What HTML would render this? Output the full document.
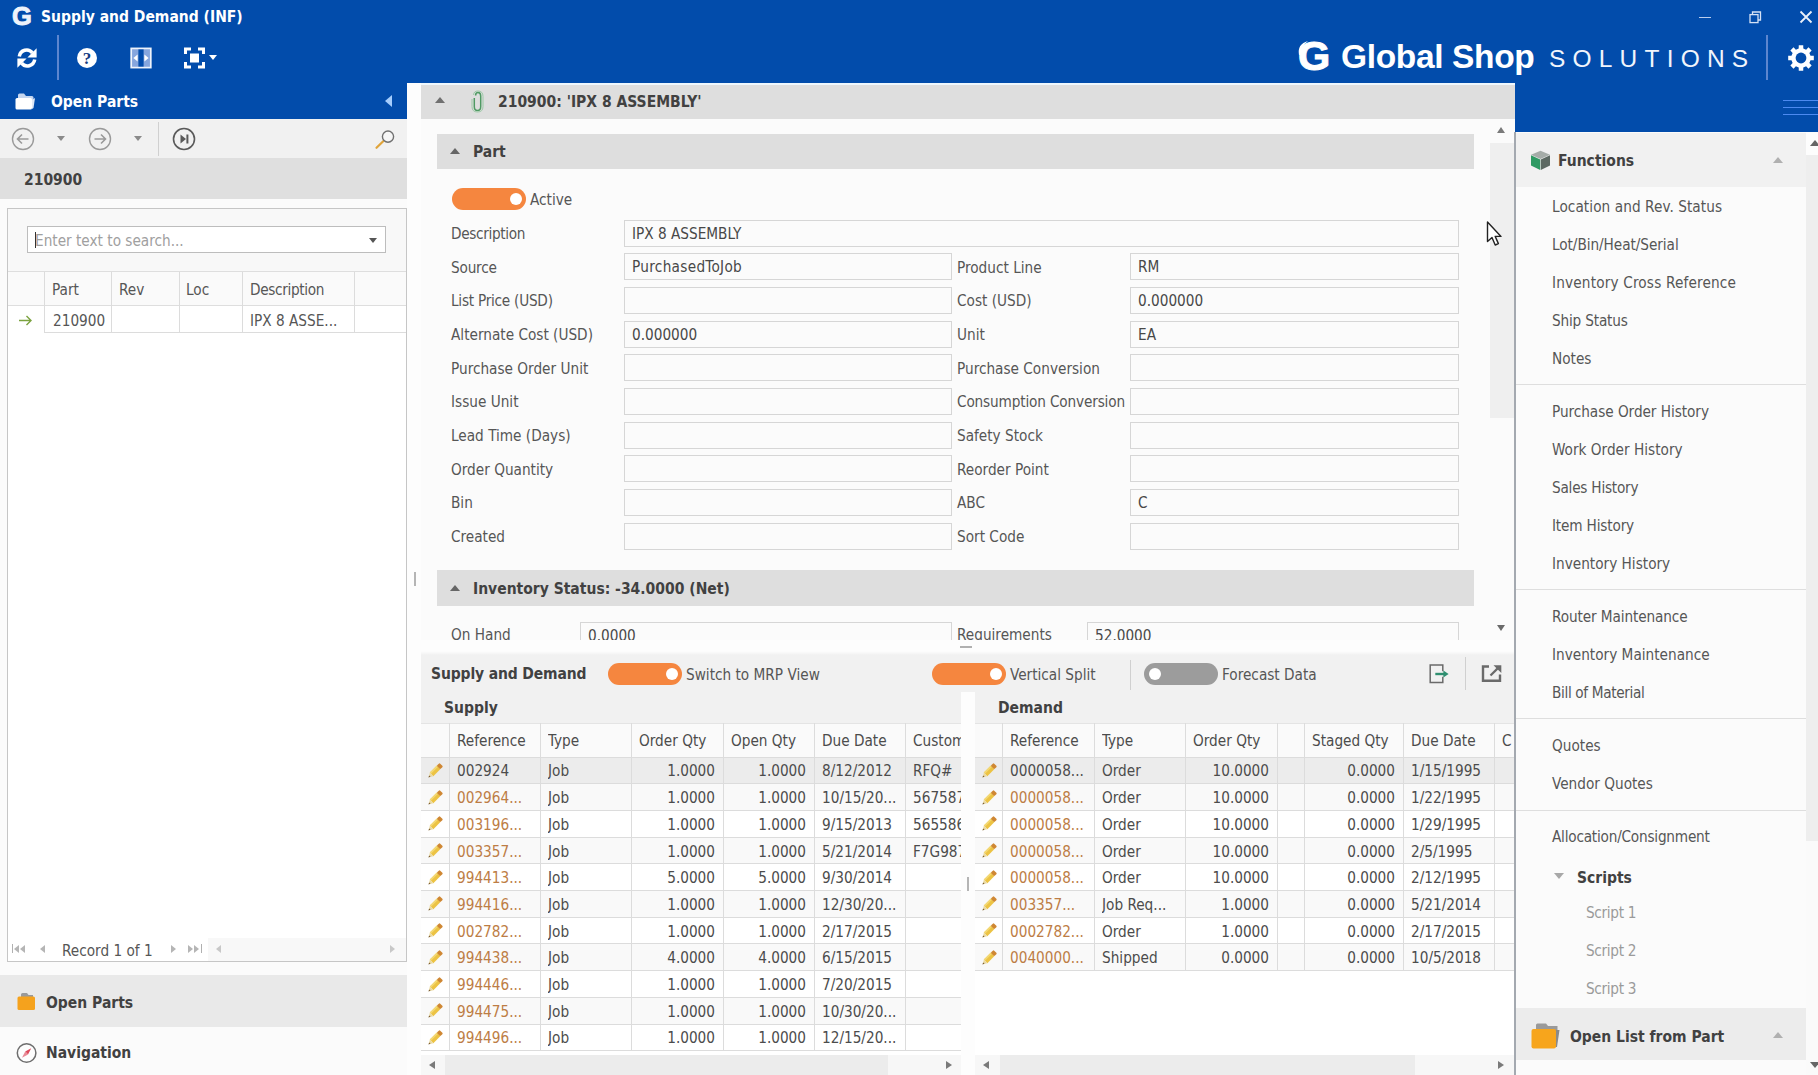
<!DOCTYPE html><html><head><meta charset='utf-8'><title>Supply and Demand (INF)</title><style>
*{box-sizing:border-box;margin:0;padding:0}
html,body{width:1818px;height:1075px;overflow:hidden;background:#fbfbfb}
body{position:relative;font-family:"DejaVu Sans Condensed","Liberation Sans",sans-serif;font-size:15.2px;color:#565656}
.a{position:absolute}
.t{position:absolute;white-space:nowrap;line-height:20px;height:20px}
.b{font-weight:bold;color:#414141}
.w{color:#fff}
.inp{position:absolute;height:27px;border:1px solid #d6d6d6;background:#fbfbfb;line-height:27px;padding-left:7px;white-space:nowrap;overflow:hidden;color:#484848}
.band{position:absolute;background:#dedede}
.tog{position:absolute;width:74px;height:22px;border-radius:11px;background:#f5863f}
.tog i{position:absolute;right:4px;top:5px;width:12px;height:12px;border-radius:6px;background:#fff}
.tog.off{background:#9c9c9c}
.tog.off i{right:auto;left:5px}
.tri-up{position:absolute;width:0;height:0;border-left:5px solid transparent;border-right:5px solid transparent;border-bottom:7px solid #6a6a6a}
.tri-dn{position:absolute;width:0;height:0;border-left:5px solid transparent;border-right:5px solid transparent;border-top:7px solid #6a6a6a}
.hl{position:absolute;height:1px;background:#dcdcdc}
.vl{position:absolute;width:1px;background:#dcdcdc}
.cell{position:absolute;white-space:nowrap;overflow:hidden;line-height:20px;height:20px;color:#4c4c4c}
.lnk{color:#bd7d45}
.r{text-align:right}
</style></head><body>
<div class='a' style='left:0px;top:0px;width:1818px;height:83px;background:#024cab;'></div>
<div class='a' style='left:0px;top:83px;width:407px;height:36px;background:#024cab;'></div>
<div class='a' style='left:1515px;top:83px;width:303px;height:49px;background:#024cab;'></div>
<div class='t b w' style='left:41px;top:7px;font-size:15.5px;color:#fff'>Supply and Demand (INF)</div>
<div class='t b w' style='left:51px;top:92px;font-size:15.5px;color:#fff'>Open Parts</div>
<div class='a' style='left:0px;top:119px;width:407px;height:39px;background:#f1f1f1;'></div>
<div class='a' style='left:0px;top:158px;width:407px;height:41px;background:#dfdfdf;'></div>
<div class='t b' style='left:24px;top:170px;font-size:15.5px'>210900</div>
<div class='a' style='left:0px;top:199px;width:407px;height:776px;background:#fbfbfb;'></div>
<div class='a' style='left:7px;top:208px;width:400px;height:754px;background:#ffffff;border:1px solid #c6c6c6'></div>
<div class='a' style='left:8px;top:209px;width:398px;height:62px;background:#f8f8f8;'></div>
<div class='a' style='left:27px;top:226px;width:359px;height:27px;background:#fff;border:1px solid #bdbdbd'></div>
<div class='t ' style='left:35px;top:231px;color:#a0a0a0'>Enter text to search...</div>
<div class='a' style='left:8px;top:271px;width:398px;height:35px;background:#fafafa;border-top:1px solid #dedede;border-bottom:1px solid #dedede'></div>
<div class='vl' style='left:44px;top:272px;height:61px'></div>
<div class='vl' style='left:111px;top:272px;height:61px'></div>
<div class='vl' style='left:179px;top:272px;height:61px'></div>
<div class='vl' style='left:242px;top:272px;height:61px'></div>
<div class='vl' style='left:354px;top:272px;height:61px'></div>
<div class='hl' style='left:44px;top:332px;width:362px'></div>
<div class='t ' style='left:52px;top:280px;'>Part</div>
<div class='t ' style='left:119px;top:280px;'>Rev</div>
<div class='t ' style='left:186px;top:280px;'>Loc</div>
<div class='t ' style='left:250px;top:280px;;letter-spacing:-0.34px;'>Description</div>
<div class='t ' style='left:53px;top:311px;'>210900</div>
<div class='t ' style='left:250px;top:311px;'>IPX 8 ASSE...</div>
<div class='t ' style='left:62px;top:941px;'>Record 1 of 1</div>
<div class='a' style='left:0px;top:975px;width:407px;height:52px;background:#e9e9e9;'></div>
<div class='t b' style='left:46px;top:993px;font-size:15.5px'>Open Parts</div>
<div class='a' style='left:0px;top:1027px;width:407px;height:48px;background:#fbfbfb;'></div>
<div class='t b' style='left:46px;top:1043px;font-size:15.5px'>Navigation</div>
<div class='a' style='left:407px;top:83px;width:14px;height:992px;background:#fdfdfd;'></div>
<div class='a' style='left:421px;top:83px;width:1094px;height:2px;background:#eef7fd;'></div>
<div class='a' style='left:421px;top:85px;width:1094px;height:34px;background:#dedede;'></div>
<div class='t b' style='left:498px;top:92px;font-size:15.5px'>210900: 'IPX 8 ASSEMBLY'</div>
<div class='a' style='left:421px;top:119px;width:1093px;height:536px;background:#fbfbfb;'></div>
<div class='a' style='left:437px;top:134px;width:1037px;height:35px;background:#dedede;'></div>
<div class='t b' style='left:473px;top:142px;font-size:15.5px'>Part</div>
<div class='tog' style='left:452px;top:188px'><i></i></div>
<div class='t ' style='left:530px;top:190px;'>Active</div>
<div class='t ' style='left:451px;top:224px;;letter-spacing:-0.34px;'>Description</div>
<div class='inp' style='left:624px;top:219.5px;width:835px'>IPX 8 ASSEMBLY</div>
<div class='t ' style='left:451px;top:258px;;letter-spacing:-0.2px;'>Source</div>
<div class='inp' style='left:624px;top:253.2px;width:328px'><span style='letter-spacing:0.3px'>PurchasedToJob</span></div>
<div class='t ' style='left:957px;top:258px;'>Product Line</div>
<div class='inp' style='left:1130px;top:253.2px;width:329px'>RM</div>
<div class='t ' style='left:451px;top:291px;;letter-spacing:-0.25px;'>List Price (USD)</div>
<div class='inp' style='left:624px;top:286.8px;width:328px'></div>
<div class='t ' style='left:957px;top:291px;'>Cost (USD)</div>
<div class='inp' style='left:1130px;top:286.8px;width:329px'>0.000000</div>
<div class='t ' style='left:451px;top:325px;'>Alternate Cost (USD)</div>
<div class='inp' style='left:624px;top:320.5px;width:328px'>0.000000</div>
<div class='t ' style='left:957px;top:325px;'>Unit</div>
<div class='inp' style='left:1130px;top:320.5px;width:329px'>EA</div>
<div class='t ' style='left:451px;top:359px;'>Purchase Order Unit</div>
<div class='inp' style='left:624px;top:354.2px;width:328px'></div>
<div class='t ' style='left:957px;top:359px;'>Purchase Conversion</div>
<div class='inp' style='left:1130px;top:354.2px;width:329px'></div>
<div class='t ' style='left:451px;top:392px;'>Issue Unit</div>
<div class='inp' style='left:624px;top:387.9px;width:328px'></div>
<div class='t ' style='left:957px;top:392px;;letter-spacing:-0.16px;'>Consumption Conversion</div>
<div class='inp' style='left:1130px;top:387.9px;width:329px'></div>
<div class='t ' style='left:451px;top:426px;'>Lead Time (Days)</div>
<div class='inp' style='left:624px;top:421.5px;width:328px'></div>
<div class='t ' style='left:957px;top:426px;'>Safety Stock</div>
<div class='inp' style='left:1130px;top:421.5px;width:329px'></div>
<div class='t ' style='left:451px;top:460px;'>Order Quantity</div>
<div class='inp' style='left:624px;top:455.2px;width:328px'></div>
<div class='t ' style='left:957px;top:460px;'>Reorder Point</div>
<div class='inp' style='left:1130px;top:455.2px;width:329px'></div>
<div class='t ' style='left:451px;top:493px;'>Bin</div>
<div class='inp' style='left:624px;top:488.9px;width:328px'></div>
<div class='t ' style='left:957px;top:493px;'>ABC</div>
<div class='inp' style='left:1130px;top:488.9px;width:329px'>C</div>
<div class='t ' style='left:451px;top:527px;'>Created</div>
<div class='inp' style='left:624px;top:522.5px;width:328px'></div>
<div class='t ' style='left:957px;top:527px;'>Sort Code</div>
<div class='inp' style='left:1130px;top:522.5px;width:329px'></div>
<div class='a' style='left:437px;top:570px;width:1037px;height:36px;background:#dedede;'></div>
<div class='t b' style='left:473px;top:579px;font-size:15.5px'>Inventory Status: -34.0000 (Net)</div>
<div class='a' style='left:421px;top:606px;width:1069px;height:34px;overflow:hidden'>
<div class='t' style='left:30px;top:19px'>On Hand</div>
<div class='inp' style='left:159px;top:16px;width:372px'>0.0000</div>
<div class='t' style='left:536px;top:19px'>Requirements</div>
<div class='inp' style='left:666px;top:16px;width:372px'>52.0000</div>
</div>
<div class='a' style='left:1490px;top:119px;width:24px;height:521px;background:#fbfbfb;'></div>
<div class='a' style='left:1490px;top:143px;width:24px;height:275px;background:#efefef;'></div>
<div class='a' style='left:421px;top:640px;width:1093px;height:15px;background:linear-gradient(#fdfdfd 0%,#fdfdfd 75%,#f1f1f1 100%);'></div>
<div class='a' style='left:960px;top:646px;width:12px;height:2px;background:#b0b0b0;'></div>
<div class='a' style='left:421px;top:655px;width:1093px;height:68px;background:#f1f1f1;'></div>
<div class='t b' style='left:431px;top:664px;font-size:15.5px;letter-spacing:-0.14px'>Supply and Demand</div>
<div class='tog' style='left:608px;top:663px'><i></i></div>
<div class='t ' style='left:686px;top:665px;'>Switch to MRP View</div>
<div class='tog' style='left:932px;top:663px'><i></i></div>
<div class='t ' style='left:1010px;top:665px;'>Vertical Split</div>
<div class='vl' style='left:1130px;top:660px;height:30px;background:#d0d0d0'></div>
<div class='tog off' style='left:1144px;top:663px'><i></i></div>
<div class='t ' style='left:1222px;top:665px;'>Forecast Data</div>
<div class='vl' style='left:1465px;top:657px;height:33px;background:#d0d0d0'></div>
<div class='t b' style='left:444px;top:698px;font-size:15.5px'>Supply</div>
<div class='t b' style='left:998px;top:698px;font-size:15.5px'>Demand</div>
<div class='a' style='left:961px;top:692px;width:14px;height:383px;background:#fdfdfd;'></div>
<div class='a' style='left:421px;top:723px;width:540px;height:34px;background:#fafafa;'></div>
<div class='a' style='left:421px;top:757.0px;width:540px;height:26.7px;background:#ececec;'></div>
<div class='a' style='left:421px;top:783.7px;width:540px;height:26.7px;background:#f9f9f9;'></div>
<div class='a' style='left:421px;top:810.4px;width:540px;height:26.7px;background:#ffffff;'></div>
<div class='a' style='left:421px;top:837.1px;width:540px;height:26.7px;background:#f9f9f9;'></div>
<div class='a' style='left:421px;top:863.8px;width:540px;height:26.7px;background:#ffffff;'></div>
<div class='a' style='left:421px;top:890.5px;width:540px;height:26.7px;background:#f9f9f9;'></div>
<div class='a' style='left:421px;top:917.2px;width:540px;height:26.7px;background:#ffffff;'></div>
<div class='a' style='left:421px;top:943.9px;width:540px;height:26.7px;background:#f9f9f9;'></div>
<div class='a' style='left:421px;top:970.6px;width:540px;height:26.7px;background:#ffffff;'></div>
<div class='a' style='left:421px;top:997.3px;width:540px;height:26.7px;background:#f9f9f9;'></div>
<div class='a' style='left:421px;top:1024.0px;width:540px;height:26.7px;background:#ffffff;'></div>
<div class='a' style='left:421px;top:1050.7px;width:540px;height:4.2999999999999545px;background:#ffffff;'></div>
<div class='hl' style='left:421px;top:723px;width:540px;background:#e4e4e4'></div>
<div class='hl' style='left:421px;top:756.5px;width:540px'></div>
<div class='hl' style='left:421px;top:783.2px;width:540px'></div>
<div class='hl' style='left:421px;top:809.9px;width:540px'></div>
<div class='hl' style='left:421px;top:836.6px;width:540px'></div>
<div class='hl' style='left:421px;top:863.3px;width:540px'></div>
<div class='hl' style='left:421px;top:890.0px;width:540px'></div>
<div class='hl' style='left:421px;top:916.7px;width:540px'></div>
<div class='hl' style='left:421px;top:943.4px;width:540px'></div>
<div class='hl' style='left:421px;top:970.1px;width:540px'></div>
<div class='hl' style='left:421px;top:996.8px;width:540px'></div>
<div class='hl' style='left:421px;top:1023.5px;width:540px'></div>
<div class='hl' style='left:421px;top:1050.2px;width:540px'></div>
<div class='vl' style='left:449px;top:723px;height:327.7px'></div>
<div class='vl' style='left:540px;top:723px;height:327.7px'></div>
<div class='vl' style='left:631px;top:723px;height:327.7px'></div>
<div class='vl' style='left:723px;top:723px;height:327.7px'></div>
<div class='vl' style='left:814px;top:723px;height:327.7px'></div>
<div class='vl' style='left:905px;top:723px;height:327.7px'></div>
<div class='cell' style='left:457px;top:731px;width:83px'>Reference</div>
<div class='cell' style='left:548px;top:731px;width:83px'>Type</div>
<div class='cell' style='left:639px;top:731px;width:84px'>Order Qty</div>
<div class='cell' style='left:731px;top:731px;width:83px'>Open Qty</div>
<div class='cell' style='left:822px;top:731px;width:83px'>Due Date</div>
<div class='cell' style='left:913px;top:731px;width:48px'>Customer</div>
<div class='cell' style='left:457px;top:761.4px;width:83px'>002924</div>
<div class='cell' style='left:548px;top:761.4px;width:83px'>Job</div>
<div class='cell r' style='left:631px;top:761.4px;width:84px'>1.0000</div>
<div class='cell r' style='left:723px;top:761.4px;width:83px'>1.0000</div>
<div class='cell' style='left:822px;top:761.4px;width:83px'>8/12/2012</div>
<div class='cell' style='left:913px;top:761.4px;width:48px'>RFQ#</div>
<svg class='a' style='left:427px;top:761.9px' width='17' height='17' viewBox='0 0 17 17'><g transform='translate(8.5 8.5) rotate(-45)'><rect x='-5.5' y='-2.5' width='10' height='5' fill='#ecc344'/><rect x='-5.5' y='-2.5' width='10' height='1.6' fill='#f3d873'/><rect x='4.2' y='-2.5' width='4' height='5' rx='1' fill='#cf8733'/><path d='M-5.5 -2.5 L-9.6 0 L-5.5 2.5Z' fill='#ead9a0'/><path d='M-8 -1 L-10 0 L-8 1Z' fill='#7a5a30'/></g></svg>
<div class='cell lnk' style='left:457px;top:788.1px;width:83px'>002964...</div>
<div class='cell' style='left:548px;top:788.1px;width:83px'>Job</div>
<div class='cell r' style='left:631px;top:788.1px;width:84px'>1.0000</div>
<div class='cell r' style='left:723px;top:788.1px;width:83px'>1.0000</div>
<div class='cell' style='left:822px;top:788.1px;width:83px'>10/15/20...</div>
<div class='cell' style='left:913px;top:788.1px;width:48px'>5675872</div>
<svg class='a' style='left:427px;top:788.6px' width='17' height='17' viewBox='0 0 17 17'><g transform='translate(8.5 8.5) rotate(-45)'><rect x='-5.5' y='-2.5' width='10' height='5' fill='#ecc344'/><rect x='-5.5' y='-2.5' width='10' height='1.6' fill='#f3d873'/><rect x='4.2' y='-2.5' width='4' height='5' rx='1' fill='#cf8733'/><path d='M-5.5 -2.5 L-9.6 0 L-5.5 2.5Z' fill='#ead9a0'/><path d='M-8 -1 L-10 0 L-8 1Z' fill='#7a5a30'/></g></svg>
<div class='cell lnk' style='left:457px;top:814.8px;width:83px'>003196...</div>
<div class='cell' style='left:548px;top:814.8px;width:83px'>Job</div>
<div class='cell r' style='left:631px;top:814.8px;width:84px'>1.0000</div>
<div class='cell r' style='left:723px;top:814.8px;width:83px'>1.0000</div>
<div class='cell' style='left:822px;top:814.8px;width:83px'>9/15/2013</div>
<div class='cell' style='left:913px;top:814.8px;width:48px'>5655868</div>
<svg class='a' style='left:427px;top:815.2px' width='17' height='17' viewBox='0 0 17 17'><g transform='translate(8.5 8.5) rotate(-45)'><rect x='-5.5' y='-2.5' width='10' height='5' fill='#ecc344'/><rect x='-5.5' y='-2.5' width='10' height='1.6' fill='#f3d873'/><rect x='4.2' y='-2.5' width='4' height='5' rx='1' fill='#cf8733'/><path d='M-5.5 -2.5 L-9.6 0 L-5.5 2.5Z' fill='#ead9a0'/><path d='M-8 -1 L-10 0 L-8 1Z' fill='#7a5a30'/></g></svg>
<div class='cell lnk' style='left:457px;top:841.5px;width:83px'>003357...</div>
<div class='cell' style='left:548px;top:841.5px;width:83px'>Job</div>
<div class='cell r' style='left:631px;top:841.5px;width:84px'>1.0000</div>
<div class='cell r' style='left:723px;top:841.5px;width:83px'>1.0000</div>
<div class='cell' style='left:822px;top:841.5px;width:83px'>5/21/2014</div>
<div class='cell' style='left:913px;top:841.5px;width:48px'>F7G9872</div>
<svg class='a' style='left:427px;top:842.0px' width='17' height='17' viewBox='0 0 17 17'><g transform='translate(8.5 8.5) rotate(-45)'><rect x='-5.5' y='-2.5' width='10' height='5' fill='#ecc344'/><rect x='-5.5' y='-2.5' width='10' height='1.6' fill='#f3d873'/><rect x='4.2' y='-2.5' width='4' height='5' rx='1' fill='#cf8733'/><path d='M-5.5 -2.5 L-9.6 0 L-5.5 2.5Z' fill='#ead9a0'/><path d='M-8 -1 L-10 0 L-8 1Z' fill='#7a5a30'/></g></svg>
<div class='cell lnk' style='left:457px;top:868.1px;width:83px'>994413...</div>
<div class='cell' style='left:548px;top:868.1px;width:83px'>Job</div>
<div class='cell r' style='left:631px;top:868.1px;width:84px'>5.0000</div>
<div class='cell r' style='left:723px;top:868.1px;width:83px'>5.0000</div>
<div class='cell' style='left:822px;top:868.1px;width:83px'>9/30/2014</div>
<svg class='a' style='left:427px;top:868.6px' width='17' height='17' viewBox='0 0 17 17'><g transform='translate(8.5 8.5) rotate(-45)'><rect x='-5.5' y='-2.5' width='10' height='5' fill='#ecc344'/><rect x='-5.5' y='-2.5' width='10' height='1.6' fill='#f3d873'/><rect x='4.2' y='-2.5' width='4' height='5' rx='1' fill='#cf8733'/><path d='M-5.5 -2.5 L-9.6 0 L-5.5 2.5Z' fill='#ead9a0'/><path d='M-8 -1 L-10 0 L-8 1Z' fill='#7a5a30'/></g></svg>
<div class='cell lnk' style='left:457px;top:894.9px;width:83px'>994416...</div>
<div class='cell' style='left:548px;top:894.9px;width:83px'>Job</div>
<div class='cell r' style='left:631px;top:894.9px;width:84px'>1.0000</div>
<div class='cell r' style='left:723px;top:894.9px;width:83px'>1.0000</div>
<div class='cell' style='left:822px;top:894.9px;width:83px'>12/30/20...</div>
<svg class='a' style='left:427px;top:895.4px' width='17' height='17' viewBox='0 0 17 17'><g transform='translate(8.5 8.5) rotate(-45)'><rect x='-5.5' y='-2.5' width='10' height='5' fill='#ecc344'/><rect x='-5.5' y='-2.5' width='10' height='1.6' fill='#f3d873'/><rect x='4.2' y='-2.5' width='4' height='5' rx='1' fill='#cf8733'/><path d='M-5.5 -2.5 L-9.6 0 L-5.5 2.5Z' fill='#ead9a0'/><path d='M-8 -1 L-10 0 L-8 1Z' fill='#7a5a30'/></g></svg>
<div class='cell lnk' style='left:457px;top:921.6px;width:83px'>002782...</div>
<div class='cell' style='left:548px;top:921.6px;width:83px'>Job</div>
<div class='cell r' style='left:631px;top:921.6px;width:84px'>1.0000</div>
<div class='cell r' style='left:723px;top:921.6px;width:83px'>1.0000</div>
<div class='cell' style='left:822px;top:921.6px;width:83px'>2/17/2015</div>
<svg class='a' style='left:427px;top:922.1px' width='17' height='17' viewBox='0 0 17 17'><g transform='translate(8.5 8.5) rotate(-45)'><rect x='-5.5' y='-2.5' width='10' height='5' fill='#ecc344'/><rect x='-5.5' y='-2.5' width='10' height='1.6' fill='#f3d873'/><rect x='4.2' y='-2.5' width='4' height='5' rx='1' fill='#cf8733'/><path d='M-5.5 -2.5 L-9.6 0 L-5.5 2.5Z' fill='#ead9a0'/><path d='M-8 -1 L-10 0 L-8 1Z' fill='#7a5a30'/></g></svg>
<div class='cell lnk' style='left:457px;top:948.2px;width:83px'>994438...</div>
<div class='cell' style='left:548px;top:948.2px;width:83px'>Job</div>
<div class='cell r' style='left:631px;top:948.2px;width:84px'>4.0000</div>
<div class='cell r' style='left:723px;top:948.2px;width:83px'>4.0000</div>
<div class='cell' style='left:822px;top:948.2px;width:83px'>6/15/2015</div>
<svg class='a' style='left:427px;top:948.8px' width='17' height='17' viewBox='0 0 17 17'><g transform='translate(8.5 8.5) rotate(-45)'><rect x='-5.5' y='-2.5' width='10' height='5' fill='#ecc344'/><rect x='-5.5' y='-2.5' width='10' height='1.6' fill='#f3d873'/><rect x='4.2' y='-2.5' width='4' height='5' rx='1' fill='#cf8733'/><path d='M-5.5 -2.5 L-9.6 0 L-5.5 2.5Z' fill='#ead9a0'/><path d='M-8 -1 L-10 0 L-8 1Z' fill='#7a5a30'/></g></svg>
<div class='cell lnk' style='left:457px;top:975.0px;width:83px'>994446...</div>
<div class='cell' style='left:548px;top:975.0px;width:83px'>Job</div>
<div class='cell r' style='left:631px;top:975.0px;width:84px'>1.0000</div>
<div class='cell r' style='left:723px;top:975.0px;width:83px'>1.0000</div>
<div class='cell' style='left:822px;top:975.0px;width:83px'>7/20/2015</div>
<svg class='a' style='left:427px;top:975.5px' width='17' height='17' viewBox='0 0 17 17'><g transform='translate(8.5 8.5) rotate(-45)'><rect x='-5.5' y='-2.5' width='10' height='5' fill='#ecc344'/><rect x='-5.5' y='-2.5' width='10' height='1.6' fill='#f3d873'/><rect x='4.2' y='-2.5' width='4' height='5' rx='1' fill='#cf8733'/><path d='M-5.5 -2.5 L-9.6 0 L-5.5 2.5Z' fill='#ead9a0'/><path d='M-8 -1 L-10 0 L-8 1Z' fill='#7a5a30'/></g></svg>
<div class='cell lnk' style='left:457px;top:1001.6px;width:83px'>994475...</div>
<div class='cell' style='left:548px;top:1001.6px;width:83px'>Job</div>
<div class='cell r' style='left:631px;top:1001.6px;width:84px'>1.0000</div>
<div class='cell r' style='left:723px;top:1001.6px;width:83px'>1.0000</div>
<div class='cell' style='left:822px;top:1001.6px;width:83px'>10/30/20...</div>
<svg class='a' style='left:427px;top:1002.1px' width='17' height='17' viewBox='0 0 17 17'><g transform='translate(8.5 8.5) rotate(-45)'><rect x='-5.5' y='-2.5' width='10' height='5' fill='#ecc344'/><rect x='-5.5' y='-2.5' width='10' height='1.6' fill='#f3d873'/><rect x='4.2' y='-2.5' width='4' height='5' rx='1' fill='#cf8733'/><path d='M-5.5 -2.5 L-9.6 0 L-5.5 2.5Z' fill='#ead9a0'/><path d='M-8 -1 L-10 0 L-8 1Z' fill='#7a5a30'/></g></svg>
<div class='cell lnk' style='left:457px;top:1028.3px;width:83px'>994496...</div>
<div class='cell' style='left:548px;top:1028.3px;width:83px'>Job</div>
<div class='cell r' style='left:631px;top:1028.3px;width:84px'>1.0000</div>
<div class='cell r' style='left:723px;top:1028.3px;width:83px'>1.0000</div>
<div class='cell' style='left:822px;top:1028.3px;width:83px'>12/15/20...</div>
<svg class='a' style='left:427px;top:1028.8px' width='17' height='17' viewBox='0 0 17 17'><g transform='translate(8.5 8.5) rotate(-45)'><rect x='-5.5' y='-2.5' width='10' height='5' fill='#ecc344'/><rect x='-5.5' y='-2.5' width='10' height='1.6' fill='#f3d873'/><rect x='4.2' y='-2.5' width='4' height='5' rx='1' fill='#cf8733'/><path d='M-5.5 -2.5 L-9.6 0 L-5.5 2.5Z' fill='#ead9a0'/><path d='M-8 -1 L-10 0 L-8 1Z' fill='#7a5a30'/></g></svg>
<div class='a' style='left:975px;top:723px;width:539px;height:34px;background:#fafafa;'></div>
<div class='a' style='left:975px;top:757.0px;width:539px;height:26.7px;background:#ececec;'></div>
<div class='a' style='left:975px;top:783.7px;width:539px;height:26.7px;background:#f9f9f9;'></div>
<div class='a' style='left:975px;top:810.4px;width:539px;height:26.7px;background:#ffffff;'></div>
<div class='a' style='left:975px;top:837.1px;width:539px;height:26.7px;background:#f9f9f9;'></div>
<div class='a' style='left:975px;top:863.8px;width:539px;height:26.7px;background:#ffffff;'></div>
<div class='a' style='left:975px;top:890.5px;width:539px;height:26.7px;background:#f9f9f9;'></div>
<div class='a' style='left:975px;top:917.2px;width:539px;height:26.7px;background:#ffffff;'></div>
<div class='a' style='left:975px;top:943.9px;width:539px;height:26.7px;background:#f9f9f9;'></div>
<div class='a' style='left:975px;top:970.6px;width:539px;height:84.39999999999998px;background:#ffffff;'></div>
<div class='hl' style='left:975px;top:723px;width:539px;background:#e4e4e4'></div>
<div class='hl' style='left:975px;top:756.5px;width:539px'></div>
<div class='hl' style='left:975px;top:783.2px;width:539px'></div>
<div class='hl' style='left:975px;top:809.9px;width:539px'></div>
<div class='hl' style='left:975px;top:836.6px;width:539px'></div>
<div class='hl' style='left:975px;top:863.3px;width:539px'></div>
<div class='hl' style='left:975px;top:890.0px;width:539px'></div>
<div class='hl' style='left:975px;top:916.7px;width:539px'></div>
<div class='hl' style='left:975px;top:943.4px;width:539px'></div>
<div class='hl' style='left:975px;top:970.1px;width:539px'></div>
<div class='vl' style='left:1002px;top:723px;height:247.6px'></div>
<div class='vl' style='left:1094px;top:723px;height:247.6px'></div>
<div class='vl' style='left:1185px;top:723px;height:247.6px'></div>
<div class='vl' style='left:1277px;top:723px;height:247.6px'></div>
<div class='vl' style='left:1304px;top:723px;height:247.6px'></div>
<div class='vl' style='left:1403px;top:723px;height:247.6px'></div>
<div class='vl' style='left:1494px;top:723px;height:247.6px'></div>
<div class='cell' style='left:1010px;top:731px;width:84px'>Reference</div>
<div class='cell' style='left:1102px;top:731px;width:83px'>Type</div>
<div class='cell' style='left:1193px;top:731px;width:84px'>Order Qty</div>
<div class='cell' style='left:1312px;top:731px;width:91px'>Staged Qty</div>
<div class='cell' style='left:1411px;top:731px;width:83px'>Due Date</div>
<div class='cell' style='left:1502px;top:731px;width:9.6px'>Customer</div>
<div class='cell' style='left:1010px;top:761.4px;width:84px'>0000058...</div>
<div class='cell' style='left:1102px;top:761.4px;width:83px'>Order</div>
<div class='cell r' style='left:1185px;top:761.4px;width:84px'>10.0000</div>
<div class='cell r' style='left:1304px;top:761.4px;width:91px'>0.0000</div>
<div class='cell' style='left:1411px;top:761.4px;width:83px'>1/15/1995</div>
<svg class='a' style='left:981px;top:761.9px' width='17' height='17' viewBox='0 0 17 17'><g transform='translate(8.5 8.5) rotate(-45)'><rect x='-5.5' y='-2.5' width='10' height='5' fill='#ecc344'/><rect x='-5.5' y='-2.5' width='10' height='1.6' fill='#f3d873'/><rect x='4.2' y='-2.5' width='4' height='5' rx='1' fill='#cf8733'/><path d='M-5.5 -2.5 L-9.6 0 L-5.5 2.5Z' fill='#ead9a0'/><path d='M-8 -1 L-10 0 L-8 1Z' fill='#7a5a30'/></g></svg>
<div class='cell lnk' style='left:1010px;top:788.1px;width:84px'>0000058...</div>
<div class='cell' style='left:1102px;top:788.1px;width:83px'>Order</div>
<div class='cell r' style='left:1185px;top:788.1px;width:84px'>10.0000</div>
<div class='cell r' style='left:1304px;top:788.1px;width:91px'>0.0000</div>
<div class='cell' style='left:1411px;top:788.1px;width:83px'>1/22/1995</div>
<svg class='a' style='left:981px;top:788.6px' width='17' height='17' viewBox='0 0 17 17'><g transform='translate(8.5 8.5) rotate(-45)'><rect x='-5.5' y='-2.5' width='10' height='5' fill='#ecc344'/><rect x='-5.5' y='-2.5' width='10' height='1.6' fill='#f3d873'/><rect x='4.2' y='-2.5' width='4' height='5' rx='1' fill='#cf8733'/><path d='M-5.5 -2.5 L-9.6 0 L-5.5 2.5Z' fill='#ead9a0'/><path d='M-8 -1 L-10 0 L-8 1Z' fill='#7a5a30'/></g></svg>
<div class='cell lnk' style='left:1010px;top:814.8px;width:84px'>0000058...</div>
<div class='cell' style='left:1102px;top:814.8px;width:83px'>Order</div>
<div class='cell r' style='left:1185px;top:814.8px;width:84px'>10.0000</div>
<div class='cell r' style='left:1304px;top:814.8px;width:91px'>0.0000</div>
<div class='cell' style='left:1411px;top:814.8px;width:83px'>1/29/1995</div>
<svg class='a' style='left:981px;top:815.2px' width='17' height='17' viewBox='0 0 17 17'><g transform='translate(8.5 8.5) rotate(-45)'><rect x='-5.5' y='-2.5' width='10' height='5' fill='#ecc344'/><rect x='-5.5' y='-2.5' width='10' height='1.6' fill='#f3d873'/><rect x='4.2' y='-2.5' width='4' height='5' rx='1' fill='#cf8733'/><path d='M-5.5 -2.5 L-9.6 0 L-5.5 2.5Z' fill='#ead9a0'/><path d='M-8 -1 L-10 0 L-8 1Z' fill='#7a5a30'/></g></svg>
<div class='cell lnk' style='left:1010px;top:841.5px;width:84px'>0000058...</div>
<div class='cell' style='left:1102px;top:841.5px;width:83px'>Order</div>
<div class='cell r' style='left:1185px;top:841.5px;width:84px'>10.0000</div>
<div class='cell r' style='left:1304px;top:841.5px;width:91px'>0.0000</div>
<div class='cell' style='left:1411px;top:841.5px;width:83px'>2/5/1995</div>
<svg class='a' style='left:981px;top:842.0px' width='17' height='17' viewBox='0 0 17 17'><g transform='translate(8.5 8.5) rotate(-45)'><rect x='-5.5' y='-2.5' width='10' height='5' fill='#ecc344'/><rect x='-5.5' y='-2.5' width='10' height='1.6' fill='#f3d873'/><rect x='4.2' y='-2.5' width='4' height='5' rx='1' fill='#cf8733'/><path d='M-5.5 -2.5 L-9.6 0 L-5.5 2.5Z' fill='#ead9a0'/><path d='M-8 -1 L-10 0 L-8 1Z' fill='#7a5a30'/></g></svg>
<div class='cell lnk' style='left:1010px;top:868.1px;width:84px'>0000058...</div>
<div class='cell' style='left:1102px;top:868.1px;width:83px'>Order</div>
<div class='cell r' style='left:1185px;top:868.1px;width:84px'>10.0000</div>
<div class='cell r' style='left:1304px;top:868.1px;width:91px'>0.0000</div>
<div class='cell' style='left:1411px;top:868.1px;width:83px'>2/12/1995</div>
<svg class='a' style='left:981px;top:868.6px' width='17' height='17' viewBox='0 0 17 17'><g transform='translate(8.5 8.5) rotate(-45)'><rect x='-5.5' y='-2.5' width='10' height='5' fill='#ecc344'/><rect x='-5.5' y='-2.5' width='10' height='1.6' fill='#f3d873'/><rect x='4.2' y='-2.5' width='4' height='5' rx='1' fill='#cf8733'/><path d='M-5.5 -2.5 L-9.6 0 L-5.5 2.5Z' fill='#ead9a0'/><path d='M-8 -1 L-10 0 L-8 1Z' fill='#7a5a30'/></g></svg>
<div class='cell lnk' style='left:1010px;top:894.9px;width:84px'>003357...</div>
<div class='cell' style='left:1102px;top:894.9px;width:83px'>Job Req...</div>
<div class='cell r' style='left:1185px;top:894.9px;width:84px'>1.0000</div>
<div class='cell r' style='left:1304px;top:894.9px;width:91px'>0.0000</div>
<div class='cell' style='left:1411px;top:894.9px;width:83px'>5/21/2014</div>
<svg class='a' style='left:981px;top:895.4px' width='17' height='17' viewBox='0 0 17 17'><g transform='translate(8.5 8.5) rotate(-45)'><rect x='-5.5' y='-2.5' width='10' height='5' fill='#ecc344'/><rect x='-5.5' y='-2.5' width='10' height='1.6' fill='#f3d873'/><rect x='4.2' y='-2.5' width='4' height='5' rx='1' fill='#cf8733'/><path d='M-5.5 -2.5 L-9.6 0 L-5.5 2.5Z' fill='#ead9a0'/><path d='M-8 -1 L-10 0 L-8 1Z' fill='#7a5a30'/></g></svg>
<div class='cell lnk' style='left:1010px;top:921.6px;width:84px'>0002782...</div>
<div class='cell' style='left:1102px;top:921.6px;width:83px'>Order</div>
<div class='cell r' style='left:1185px;top:921.6px;width:84px'>1.0000</div>
<div class='cell r' style='left:1304px;top:921.6px;width:91px'>0.0000</div>
<div class='cell' style='left:1411px;top:921.6px;width:83px'>2/17/2015</div>
<svg class='a' style='left:981px;top:922.1px' width='17' height='17' viewBox='0 0 17 17'><g transform='translate(8.5 8.5) rotate(-45)'><rect x='-5.5' y='-2.5' width='10' height='5' fill='#ecc344'/><rect x='-5.5' y='-2.5' width='10' height='1.6' fill='#f3d873'/><rect x='4.2' y='-2.5' width='4' height='5' rx='1' fill='#cf8733'/><path d='M-5.5 -2.5 L-9.6 0 L-5.5 2.5Z' fill='#ead9a0'/><path d='M-8 -1 L-10 0 L-8 1Z' fill='#7a5a30'/></g></svg>
<div class='cell lnk' style='left:1010px;top:948.2px;width:84px'>0040000...</div>
<div class='cell' style='left:1102px;top:948.2px;width:83px'>Shipped</div>
<div class='cell r' style='left:1185px;top:948.2px;width:84px'>0.0000</div>
<div class='cell r' style='left:1304px;top:948.2px;width:91px'>0.0000</div>
<div class='cell' style='left:1411px;top:948.2px;width:83px'>10/5/2018</div>
<svg class='a' style='left:981px;top:948.8px' width='17' height='17' viewBox='0 0 17 17'><g transform='translate(8.5 8.5) rotate(-45)'><rect x='-5.5' y='-2.5' width='10' height='5' fill='#ecc344'/><rect x='-5.5' y='-2.5' width='10' height='1.6' fill='#f3d873'/><rect x='4.2' y='-2.5' width='4' height='5' rx='1' fill='#cf8733'/><path d='M-5.5 -2.5 L-9.6 0 L-5.5 2.5Z' fill='#ead9a0'/><path d='M-8 -1 L-10 0 L-8 1Z' fill='#7a5a30'/></g></svg>
<div class='a' style='left:421px;top:1055px;width:540px;height:20px;background:#f7f7f7;'></div>
<div class='a' style='left:445px;top:1055px;width:443px;height:20px;background:#ececec;'></div>
<div class='a' style='left:975px;top:1055px;width:539px;height:20px;background:#f7f7f7;'></div>
<div class='a' style='left:1000px;top:1055px;width:415px;height:20px;background:#ececec;'></div>
<div class='a' style='left:1514px;top:132px;width:304px;height:943px;background:#fbfbfb;'></div>
<div class='vl' style='left:1514px;top:132px;height:943px;background:#a4a9b0;width:1.5px'></div>
<div class='a' style='left:1516px;top:133px;width:290px;height:54px;background:#f1f1f1;'></div>
<div class='t b' style='left:1558px;top:151px;font-size:15.5px'>Functions</div>
<div class='t ' style='left:1552px;top:197px;;letter-spacing:0.07px;'>Location and Rev. Status</div>
<div class='t ' style='left:1552px;top:235px;;letter-spacing:-0.06px;'>Lot/Bin/Heat/Serial</div>
<div class='t ' style='left:1552px;top:273px;;letter-spacing:0.16px;'>Inventory Cross Reference</div>
<div class='t ' style='left:1552px;top:311px;;letter-spacing:-0.18px;'>Ship Status</div>
<div class='t ' style='left:1552px;top:349px;'>Notes</div>
<div class='t ' style='left:1552px;top:402px;;letter-spacing:-0.05px;'>Purchase Order History</div>
<div class='t ' style='left:1552px;top:440px;'>Work Order History</div>
<div class='t ' style='left:1552px;top:478px;;letter-spacing:-0.23px;'>Sales History</div>
<div class='t ' style='left:1552px;top:516px;;letter-spacing:-0.17px;'>Item History</div>
<div class='t ' style='left:1552px;top:554px;'>Inventory History</div>
<div class='t ' style='left:1552px;top:607px;;letter-spacing:-0.11px;'>Router Maintenance</div>
<div class='t ' style='left:1552px;top:645px;'>Inventory Maintenance</div>
<div class='t ' style='left:1552px;top:683px;;letter-spacing:-0.36px;'>Bill of Material</div>
<div class='t ' style='left:1552px;top:736px;'>Quotes</div>
<div class='t ' style='left:1552px;top:774px;'>Vendor Quotes</div>
<div class='t ' style='left:1552px;top:827px;;letter-spacing:-0.22px;'>Allocation/Consignment</div>
<div class='hl' style='left:1516px;top:384px;width:290px;background:#dedede'></div>
<div class='hl' style='left:1516px;top:589px;width:290px;background:#dedede'></div>
<div class='hl' style='left:1516px;top:718px;width:290px;background:#dedede'></div>
<div class='hl' style='left:1516px;top:810px;width:290px;background:#dedede'></div>
<div class='t b' style='left:1577px;top:868px;font-size:15.5px'>Scripts</div>
<div class='t ' style='left:1586px;top:903px;color:#9a9a9a;letter-spacing:-0.31px;'>Script 1</div>
<div class='t ' style='left:1586px;top:941px;color:#9a9a9a;letter-spacing:-0.31px;'>Script 2</div>
<div class='t ' style='left:1586px;top:979px;color:#9a9a9a;letter-spacing:-0.31px;'>Script 3</div>
<div class='a' style='left:1516px;top:1008px;width:290px;height:52px;background:#ececec;'></div>
<div class='t b' style='left:1570px;top:1027px;font-size:15.5px'>Open List from Part</div>
<div class='a' style='left:1806px;top:132px;width:12px;height:23px;background:#fdfdfd;'></div>
<div class='a' style='left:1806px;top:155px;width:12px;height:686px;background:#eeeeee;'></div>
<div class='a' style='left:1806px;top:841px;width:12px;height:234px;background:#fafafa;'></div>
<div class='t' style='left:12px;top:2px;height:28px;line-height:28px;font:bold 25.5px "Liberation Sans",sans-serif;color:#eef3fb;-webkit-text-stroke:0.9px #eef3fb'>G</div>
<svg class='a' style='left:15px;top:47px;' width='24' height='22' viewBox='0 0 24 22'><path d='M4.3 9.4 A7.4 7.4 0 0 1 17.4 5.8' fill='none' stroke='#fff' stroke-width='3.5'/><path d='M21.6 1.2 L21.6 10.4 L12.4 10.4 Z' fill='#fff'/><path d='M19.7 12.6 A7.4 7.4 0 0 1 6.6 16.2' fill='none' stroke='#fff' stroke-width='3.5'/><path d='M2.4 20.8 L2.4 11.6 L11.6 11.6 Z' fill='#fff'/></svg>
<div class='a' style='left:57px;top:35px;width:2px;height:45px;background:#5d86cf;'></div>
<svg class='a' style='left:76px;top:47px;' width='22' height='22' viewBox='0 0 22 22'><circle cx='11' cy='11' r='10' fill='#fff'/><text x='11' y='16.5' text-anchor='middle' font-family='"Liberation Serif",serif' font-weight='bold' font-size='17' fill='#153a80'>?</text></svg>
<svg class='a' style='left:130px;top:47px;' width='22' height='22' viewBox='0 0 22 22'><rect x='1.2' y='1.4' width='19.6' height='19.2' fill='#86a6de' stroke='#eef3fb' stroke-width='1.7'/><path d='M3.4 11 L7.6 7.4 L7.6 14.6 Z' fill='#fff'/><path d='M18.6 11 L14.4 7.4 L14.4 14.6 Z' fill='#fff'/><rect x='8.4' y='2.4' width='5.2' height='17.2' fill='#024cab'/></svg>
<svg class='a' style='left:184px;top:47px;' width='21' height='22' viewBox='0 0 21 22'><path d='M1.5 7 V2 H7 M14 2 H19.5 V7 M19.5 15 V20 H14 M7 20 H1.5 V15' fill='none' stroke='#fff' stroke-width='3'/><rect x='6' y='6.5' width='9' height='9' fill='#fff'/></svg>
<div class='tri-dn' style='left:209px;top:55px;border-top-color:#fff;border-left-width:4px;border-right-width:4px;border-top-width:5px'></div>
<svg class='a' style='left:14px;top:92px;' width='22' height='19' viewBox='0 0 22 19'><path d='M4 3 Q4 1.5 5.5 1.5 H10 L12 4 H18 Q19.5 4 19.5 5.5 V8 H4 Z' fill='#c5d6f0'/><path d='M1.5 7.5 Q1.5 6 3 6 H16.5 Q18 6 18 7.5 V16 Q18 17.5 16.5 17.5 H3 Q1.5 17.5 1.5 16 Z' fill='#fff'/><path d='M18 8 L21 6 L19.5 16 L18 17 Z' fill='#dfe8f6'/></svg>
<div class='a' style='left:385px;top:95px;width:0;height:0;border-top:6px solid transparent;border-bottom:6px solid transparent;border-right:7px solid #a5cdfd'></div>
<div class='a' style='left:1699px;top:17px;width:12px;height:1px;background:#b9cdee;'></div>
<svg class='a' style='left:1749px;top:11px;' width='13' height='13' viewBox='0 0 13 13'><path d='M3.5 3.5 V1 H11.5 V9 H9' fill='none' stroke='#d5e1f5' stroke-width='1.3'/><rect x='1' y='3.6' width='8' height='8' fill='none' stroke='#d5e1f5' stroke-width='1.3'/></svg>
<svg class='a' style='left:1799px;top:10px;' width='14' height='14' viewBox='0 0 14 14'><path d='M1.5 1.5 L12.5 12.5 M12.5 1.5 L1.5 12.5' stroke='#eaf0fa' stroke-width='1.8'/></svg>
<div class='t' style='left:1298px;top:32px;height:48px;line-height:48px;font:bold 41.5px "Liberation Sans",sans-serif;color:#fff;-webkit-text-stroke:1px #fff'>G</div>
<svg class='a' style='left:1296px;top:38px;' width='20' height='20' viewBox='0 0 20 20'><path d='M3 17 Q1 6 12 3 Q5 8 6.5 16 Z' fill='#fff'/></svg>
<div class='t' style='left:1341px;top:37.5px;height:40px;line-height:40px;font:bold 33.5px "Liberation Sans",sans-serif;letter-spacing:-0.35px;color:#fff'>Global Shop</div>
<div class='t' style='left:1549px;top:45px;height:30px;line-height:30px;font:normal 24.5px "Liberation Sans",sans-serif;letter-spacing:7.2px;color:#f1f5fc'>SOLUTIONS</div>
<div class='a' style='left:1766px;top:35px;width:2px;height:45px;background:#5d86cf;'></div>
<svg class='a' style='left:1786px;top:44px;' width='30' height='28' viewBox='0 0 30 28'><path d='M27.81 11.76 L27.81 16.24 L24.53 16.29 L23.36 19.12 L25.64 21.48 L22.48 24.64 L20.12 22.36 L17.29 23.53 L17.24 26.81 L12.76 26.81 L12.71 23.53 L9.88 22.36 L7.52 24.64 L4.36 21.48 L6.64 19.12 L5.47 16.29 L2.19 16.24 L2.19 11.76 L5.47 11.71 L6.64 8.88 L4.36 6.52 L7.52 3.36 L9.88 5.64 L12.71 4.47 L12.76 1.19 L17.24 1.19 L17.29 4.47 L20.12 5.64 L22.48 3.36 L25.64 6.52 L23.36 8.88 L24.53 11.71 Z' fill='#fff'/><circle cx='15' cy='14' r='5.4' fill='#024cab'/></svg>
<div class='a' style='left:1783px;top:99.8px;width:35px;height:1.5px;background:#4c8af0;'></div>
<div class='a' style='left:1783px;top:106.8px;width:35px;height:1.5px;background:#4c8af0;'></div>
<div class='a' style='left:1783px;top:113.8px;width:35px;height:1.5px;background:#4c8af0;'></div>
<svg class='a' style='left:10.5px;top:127px;' width='24' height='24' viewBox='0 0 24 24'><circle cx='12' cy='12' r='10.5' fill='none' stroke='#9a9a9a' stroke-width='1.4'/><path d='M17.5 12 H7 M11 7.5 L6.5 12 L11 16.5' fill='none' stroke='#9a9a9a' stroke-width='1.6'/></svg>
<svg class='a' style='left:87.5px;top:127px;' width='24' height='24' viewBox='0 0 24 24'><circle cx='12' cy='12' r='10.5' fill='none' stroke='#9a9a9a' stroke-width='1.4'/><path d='M6.5 12 H17 M13 7.5 L17.5 12 L13 16.5' fill='none' stroke='#9a9a9a' stroke-width='1.6'/></svg>
<svg class='a' style='left:172px;top:127px;' width='24' height='24' viewBox='0 0 24 24'><circle cx='12' cy='12' r='10.5' fill='none' stroke='#5a5a5a' stroke-width='1.6'/><path d='M8.5 7.5 L14 12 L8.5 16.5 Z' fill='#5a5a5a'/><rect x='14.4' y='7.5' width='2' height='9' fill='#5a5a5a'/></svg>
<div class='tri-dn' style='left:57px;top:136px;border-top-color:#8a8a8a;border-left-width:4px;border-right-width:4px;border-top-width:5px'></div>
<div class='tri-dn' style='left:134px;top:136px;border-top-color:#8a8a8a;border-left-width:4px;border-right-width:4px;border-top-width:5px'></div>
<div class='vl' style='left:158px;top:122px;height:34px;background:#d0d0d0'></div>
<svg class='a' style='left:374px;top:128px;' width='22' height='22' viewBox='0 0 22 22'><path d='M10.5 12 L2.5 19.8' stroke='#e0a43a' stroke-width='2.2' stroke-linecap='round'/><circle cx='14' cy='8.6' r='5.6' fill='#f6f6f6' stroke='#707070' stroke-width='1.4'/></svg>
<div class='tri-dn' style='left:369px;top:238px;border-top-color:#555;border-left-width:4px;border-right-width:4px;border-top-width:5px'></div>
<div class='a' style='left:35px;top:232px;width:1px;height:16px;background:#333;'></div>
<svg class='a' style='left:18px;top:314px;' width='15' height='13' viewBox='0 0 15 13'><path d='M1 6.5 H13 M8.5 2 L13 6.5 L8.5 11' fill='none' stroke='#7ba23f' stroke-width='1.4'/></svg>
<div class='a' style='left:12px;top:944px;width:1px;height:9px;background:#b0b0b0;'></div>
<div class='a' style='left:14px;top:944.5px;width:0;height:0;border-top:4px solid transparent;border-bottom:4px solid transparent;border-right:5px solid #b5b5b5'></div>
<div class='a' style='left:20px;top:944.5px;width:0;height:0;border-top:4px solid transparent;border-bottom:4px solid transparent;border-right:5px solid #b5b5b5'></div>
<div class='a' style='left:40px;top:944.5px;width:0;height:0;border-top:4px solid transparent;border-bottom:4px solid transparent;border-right:5px solid #b5b5b5'></div>
<div class='a' style='left:171px;top:944.5px;width:0;height:0;border-top:4px solid transparent;border-bottom:4px solid transparent;border-left:5px solid #b5b5b5'></div>
<div class='a' style='left:188px;top:944.5px;width:0;height:0;border-top:4px solid transparent;border-bottom:4px solid transparent;border-left:5px solid #b5b5b5'></div>
<div class='a' style='left:194px;top:944.5px;width:0;height:0;border-top:4px solid transparent;border-bottom:4px solid transparent;border-left:5px solid #b5b5b5'></div>
<div class='a' style='left:201px;top:944px;width:1px;height:9px;background:#b0b0b0;'></div>
<div class='a' style='left:216px;top:944.5px;width:0;height:0;border-top:4px solid transparent;border-bottom:4px solid transparent;border-right:5px solid #c8c8c8'></div>
<div class='a' style='left:390px;top:944.5px;width:0;height:0;border-top:4px solid transparent;border-bottom:4px solid transparent;border-left:5px solid #c8c8c8'></div>
<div class='a' style='left:208px;top:938px;width:198px;height:23px;background:#f8f8f8;'></div>
<div class='a' style='left:216px;top:944.5px;width:0;height:0;border-top:4px solid transparent;border-bottom:4px solid transparent;border-right:5px solid #c8c8c8'></div>
<div class='a' style='left:390px;top:944.5px;width:0;height:0;border-top:4px solid transparent;border-bottom:4px solid transparent;border-left:5px solid #c8c8c8'></div>
<svg class='a' style='left:16px;top:992px;' width='22' height='20' viewBox='0 0 22 20'><path d='M5 2.5 Q5 1 6.5 1 H11 L12.5 3 H17 V6 H5 Z' fill='#9a9a9a'/><path d='M1.5 6 Q1.5 4.5 3 4.5 H17.5 Q19 4.5 19 6 V16.5 Q19 18 17.5 18 H3 Q1.5 18 1.5 16.5 Z' fill='#f5a21d'/></svg>
<svg class='a' style='left:15px;top:1041px;' width='23' height='23' viewBox='0 0 23 23'><circle cx='11.6' cy='12' r='9.3' fill='#fdfdfd' stroke='#6e6e6e' stroke-width='1.5'/><path d='M16.2 7.2 L13 13.4 L10.2 10.6 Z' fill='#dd4a5c'/><path d='M7 16.8 L10.2 10.6 L13 13.4 Z' fill='#e88a96'/></svg>
<div class='a' style='left:414px;top:572px;width:2px;height:14px;background:#b5b5b5;'></div>
<div class='a' style='left:967px;top:877px;width:2px;height:14px;background:#b5b5b5;'></div>
<div class='tri-up' style='left:435px;top:97px;border-bottom-color:#707070;border-bottom-width:6.5px'></div>
<div class='tri-up' style='left:450px;top:148px;border-bottom-color:#666;border-bottom-width:6px'></div>
<div class='tri-up' style='left:450px;top:585px;border-bottom-color:#666;border-bottom-width:6px'></div>
<svg class='a' style='left:470px;top:90px;' width='15' height='23' viewBox='0 0 15 23'><path d='M4.3 8 V16.5 Q4.3 20.5 7.5 20.5 Q10.7 20.5 10.7 16.5 V6 Q10.7 2.5 8 2.5 Q5.6 2.5 5.6 5.5' fill='none' stroke='#4f9a63' stroke-width='1.5'/><path d='M2 9 V16.5 Q2 22 7.5 22 Q13 22 13 16.5 V6.5 Q13 1 8 1 Q3.6 1 3.6 5' fill='none' stroke='#9cc9a6' stroke-width='1'/></svg>
<div class='tri-up' style='left:1496.5px;top:127px;border-bottom-color:#7a7a7a;border-bottom-width:6.3px;border-left-width:4.5px;border-right-width:4.5px'></div>
<div class='tri-dn' style='left:1496.5px;top:625px;border-top-color:#6a6a6a;border-top-width:6.5px;border-left-width:4.5px;border-right-width:4.5px'></div>
<svg class='a' style='left:1485px;top:220px;' width='20' height='28' viewBox='0 0 20 28'><path d='M2.5 2 V21.5 L7 17.5 L10.2 25 L13.4 23.6 L10.2 16.4 H16 Z' fill='#fff' stroke='#222' stroke-width='1.4' stroke-linejoin='round'/></svg>
<svg class='a' style='left:1427px;top:662px;' width='24' height='24' viewBox='0 0 24 24'><path d='M15.8 9.2 V2.9 H3.2 V20.6 H15.8 V14.8' fill='none' stroke='#6a6a6a' stroke-width='1.5'/><path d='M8.3 12 H17' fill='none' stroke='#2f8f70' stroke-width='2.4'/><path d='M16.4 8.4 L21.6 12 L16.4 15.6 Z' fill='#2f8f70'/></svg>
<svg class='a' style='left:1480px;top:662px;' width='24' height='24' viewBox='0 0 24 24'><path d='M9 4.5 H3 V18.7 H20 V12.5' fill='none' stroke='#6a6a6a' stroke-width='2.4'/><path d='M19.4 4.6 L10.5 13.5' fill='none' stroke='#6a6a6a' stroke-width='2.2'/><path d='M13.5 3.2 H21.3 V11 Z' fill='#6a6a6a'/></svg>
<div class='a' style='left:429px;top:1061px;width:0;height:0;border-top:4px solid transparent;border-bottom:4px solid transparent;border-right:6px solid #7a7a7a'></div>
<div class='a' style='left:946px;top:1061px;width:0;height:0;border-top:4px solid transparent;border-bottom:4px solid transparent;border-left:6px solid #7a7a7a'></div>
<div class='a' style='left:983px;top:1061px;width:0;height:0;border-top:4px solid transparent;border-bottom:4px solid transparent;border-right:6px solid #7a7a7a'></div>
<div class='a' style='left:1498px;top:1061px;width:0;height:0;border-top:4px solid transparent;border-bottom:4px solid transparent;border-left:6px solid #7a7a7a'></div>
<svg class='a' style='left:1529px;top:149px;' width='23' height='23' viewBox='0 0 23 23'><path d='M11.5 1.8 L21 5.8 L11.5 10 L2 5.8 Z' fill='#a5aca8'/><path d='M2 6.3 L11.2 10.5 V21 L2 16.6 Z' fill='#2f9a63'/><path d='M21 6.3 L11.8 10.5 V21 L21 16.6 Z' fill='#5c6962'/></svg>
<div class='tri-up' style='left:1773px;top:157px;border-bottom-color:#b0b0b0;border-bottom-width:6px'></div>
<div class='tri-up' style='left:1773px;top:1032px;border-bottom-color:#b0b0b0;border-bottom-width:6px'></div>
<div class='tri-dn' style='left:1554px;top:873px;border-top-color:#a8a8a8;border-top-width:6px'></div>
<svg class='a' style='left:1529px;top:1021px;' width='33' height='30' viewBox='0 0 33 30'><path d='M7 4 Q7 2.5 8.5 2.5 H17 L19 5 H28.5 V12 H7 Z' fill='#9a9a9a'/><path d='M26 9 H30.5 L28 26 H26 Z' fill='#8a8a8a'/><path d='M2.5 10 Q2.5 8 4.5 8 H25 Q27 8 27 10 V25.5 Q27 27.5 25 27.5 H4.5 Q2.5 27.5 2.5 25.5 Z' fill='#f7a51c'/></svg>
<div class='tri-up' style='left:1810px;top:140px;border-bottom-color:#666;border-bottom-width:6px'></div>
<div class='tri-dn' style='left:1810px;top:1062px;border-top-color:#666;border-top-width:6px'></div>
</body></html>
